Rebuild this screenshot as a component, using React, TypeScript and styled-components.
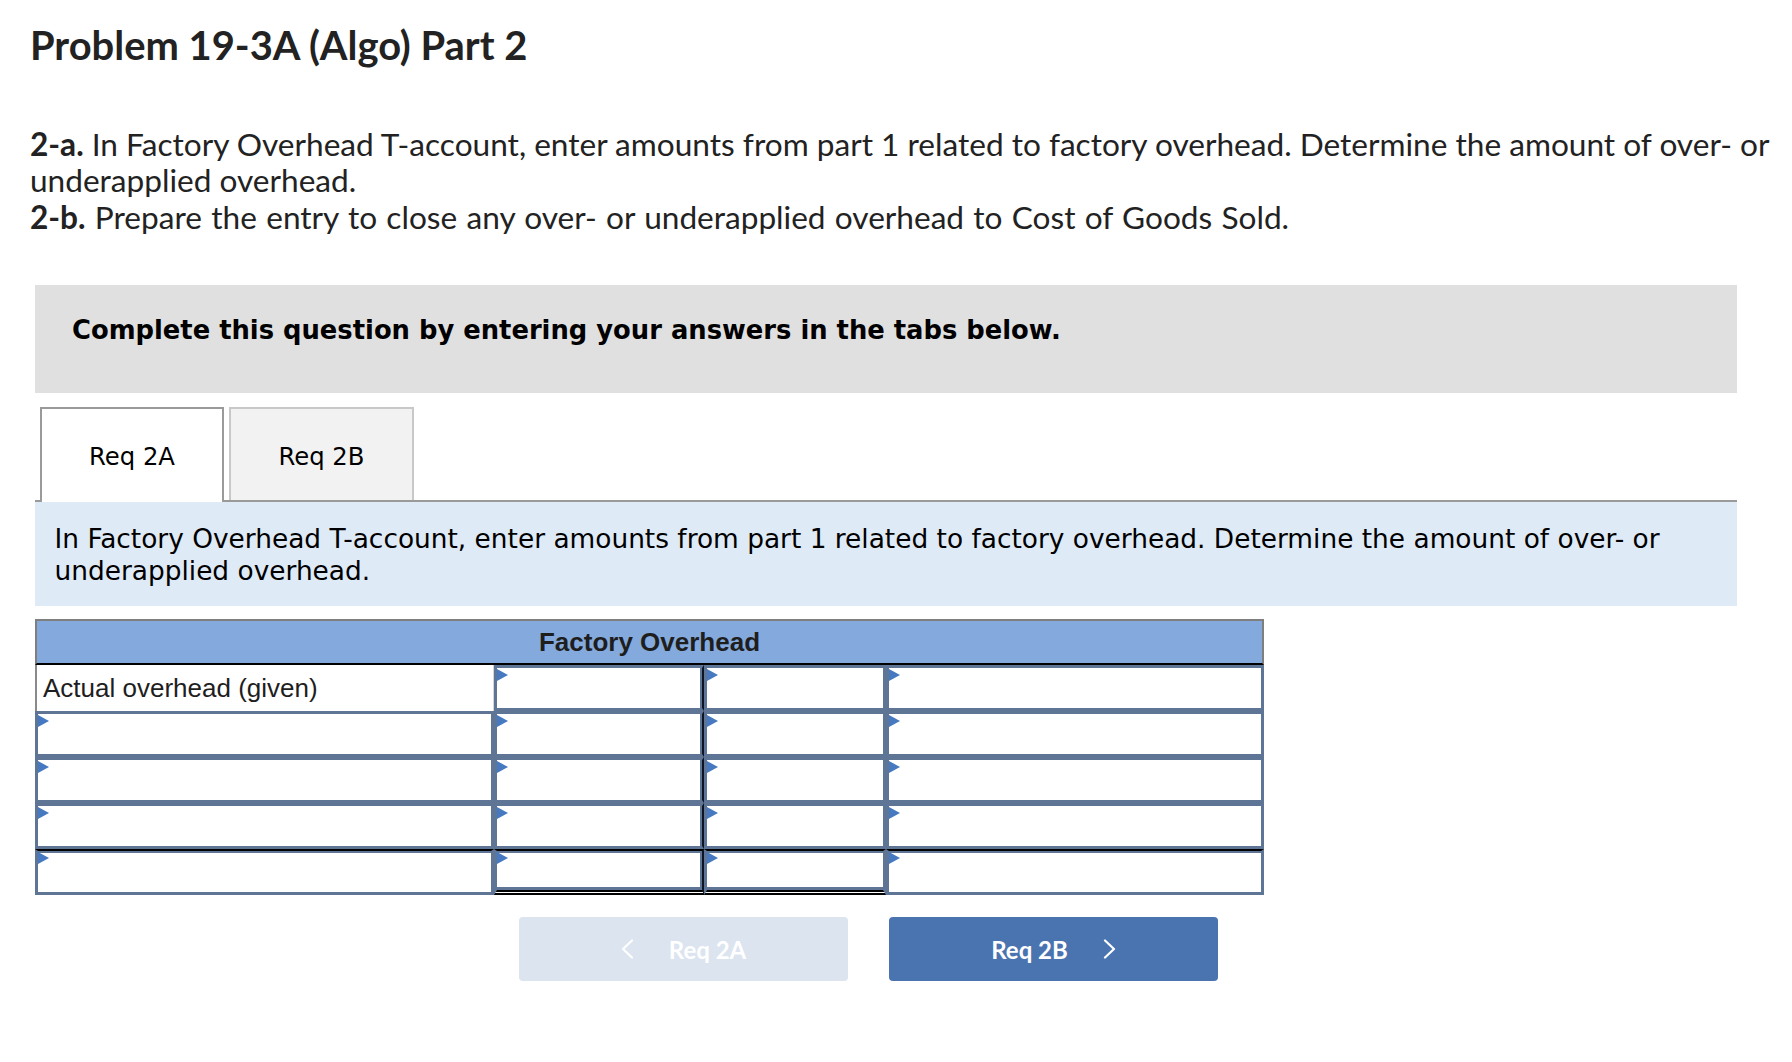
import React from "react";
import styled, { createGlobalStyle, css } from "styled-components";

const GlobalStyle = createGlobalStyle`
  html, body { margin: 0; padding: 0; background: #ffffff; }
  body { font-family: "Lato", "Liberation Sans", sans-serif; color: #222222; }
  * { box-sizing: border-box; }
`;

const SLATE = "#5f7596";

const Page = styled.div`
  padding-top: 21px;
  width: 1792px;
`;

const Title = styled.h1`
  margin: 0 0 0 30px;
  font-family: "Lato", sans-serif;
  font-weight: 700;
  font-size: 39.9px;
  line-height: 48px;
  color: #222222;
`;

const Prompt = styled.div`
  margin: 56.5px 0 0 30px;
  font-family: "Lato", sans-serif;
  font-size: 31.6px;
  line-height: 36.7px;
  color: #222222;
  white-space: nowrap;
`;

const Lead = styled.b`
  font-weight: 700;
`;

const Line = styled.span<{ $loose?: boolean }>`
  word-spacing: ${(p) => (p.$loose ? "1.2px" : "0")};
`;

const Content = styled.div`
  margin-left: 35px;
  width: 1702px;
`;

const InfoBar = styled.div`
  margin-top: 49.4px;
  background: #e0e0e0;
  padding: 30px 37px 48px;
  font-family: "DejaVu Sans", Verdana, sans-serif;
  font-weight: 700;
  font-size: 25.8px;
  line-height: 30px;
  color: #000000;
`;

const TabList = styled.div`
  margin-top: 14px;
  display: flex;
  align-items: flex-start;
  gap: 5px;
  padding-left: 5px;
  border-bottom: 2px solid #9a9a9a;
  height: 95px;
`;

const Tab = styled.div<{ $active?: boolean }>`
  width: ${(p) => (p.$active ? 184 : 185)}px;
  height: ${(p) => (p.$active ? 95 : 93)}px;
  display: flex;
  align-items: center;
  justify-content: center;
  padding-top: 4px;
  padding-bottom: ${(p) => (p.$active ? 2 : 0)}px;
  font-family: "DejaVu Sans", Verdana, sans-serif;
  font-size: 24.3px;
  line-height: 28px;
  color: #000000;
  border: 2px solid ${(p) => (p.$active ? "#9a9a9a" : "#c8c8c8")};
  border-bottom: 0;
  background: ${(p) => (p.$active ? "#ffffff" : "#f2f2f2")};
`;

const Instruction = styled.div`
  background: #dfeaf7;
  padding: 21px 16px 19px 19.5px;
  font-family: "DejaVu Sans", Verdana, sans-serif;
  font-size: 26.4px;
  line-height: 32px;
  color: #000000;
`;

const TAccount = styled.div`
  margin-top: 13px;
  width: 1229px;
`;

const Header = styled.div`
  height: 46px;
  display: flex;
  align-items: center;
  justify-content: center;
  background: #84aadd;
  border: 2px solid #7f7f7f;
  border-bottom: 2px solid #000000;
  font-family: "Liberation Sans", Arial, sans-serif;
  font-weight: 700;
  font-size: 26px;
  color: #1e1e1e;
`;

const Grid = styled.div`
  display: grid;
  grid-template-columns: 459px 210px 182px 378px;
  grid-auto-rows: 46px;
`;

const LabelCell = styled.div`
  display: flex;
  align-items: center;
  padding-left: 6px;
  border-left: 2px solid #8a8a8a;
  border-right: 1px solid #d6d6d6;
  font-family: "Liberation Sans", Arial, sans-serif;
  font-size: 26px;
  color: #1e1e1e;
  background: #ffffff;
`;

const InputCell = styled.div<{ $tLine?: boolean; $total?: boolean; $double?: boolean }>`
  position: relative;
  background: #ffffff;
  border: 3px solid ${SLATE};
  ${(p) =>
    p.$tLine &&
    css`
      border-right: 2px solid #0d1524;
    `}
  ${(p) =>
    p.$total &&
    css`
      border-top: 2px solid #000000;
    `}
  ${(p) =>
    p.$double &&
    css`
      border-bottom: 5px double #000000;
    `}
  box-shadow: ${(p) => {
    const s: string[] = [];
    if (p.$tLine) s.push(`inset -2px 0 0 ${SLATE}`);
    if (p.$total) s.push(`inset 0 2px 0 ${SLATE}`);
    if (p.$double) s.push(`inset 0 -3px 0 ${SLATE}`);
    return s.length ? s.join(", ") : "none";
  }};

  &::before {
    content: "";
    position: absolute;
    left: 0;
    top: 1px;
    width: 0;
    height: 0;
    border-left: 11px solid #4679c0;
    border-top: 6.5px solid transparent;
    border-bottom: 6.5px solid transparent;
  }
`;

const NavRow = styled.div`
  margin-top: 22px;
  padding-left: 484px;
  display: flex;
  gap: 41px;
`;

const NavButton = styled.button<{ $disabled?: boolean }>`
  width: 329px;
  height: 64px;
  border: 0;
  border-radius: 4px;
  display: flex;
  align-items: center;
  justify-content: center;
  gap: 35px;
  font-family: "Lato", sans-serif;
  font-weight: 700;
  font-size: 24px;
  color: #ffffff;
  background: ${(p) => (p.$disabled ? "#dbe4ef" : "#4a74b0")};
  cursor: ${(p) => (p.$disabled ? "default" : "pointer")};
  padding: 0;
`;

const Chevron = ({ dir }: { dir: "left" | "right" }) => (
  <svg width="13" height="20" viewBox="0 0 13 20" aria-hidden="true">
    <polyline
      points={dir === "left" ? "11,1.5 2,10 11,18.5" : "2,1.5 11,10 2,18.5"}
      fill="none"
      stroke="#ffffff"
      strokeWidth="2.2"
      strokeLinecap="round"
      strokeLinejoin="round"
    />
  </svg>
);

const rows = [0, 1, 2, 3, 4];

export default function App() {
  return (
    <>
      <GlobalStyle />
      <Page>
        <Title>Problem 19-3A (Algo) Part 2</Title>
        <Prompt>
          <Lead>2-a.</Lead>
          <Line>
            {" "}
            In Factory Overhead T-account, enter amounts from part 1 related to factory overhead. Determine the
            amount of over- or
          </Line>
          <br />
          <Line>underapplied overhead.</Line>
          <br />
          <Lead>2-b.</Lead>
          <Line $loose> Prepare the entry to close any over- or underapplied overhead to Cost of Goods Sold.</Line>
        </Prompt>
        <Content>
          <InfoBar>Complete this question by entering your answers in the tabs below.</InfoBar>
          <TabList>
            <Tab $active>Req 2A</Tab>
            <Tab>Req 2B</Tab>
          </TabList>
          <Instruction>
            In Factory Overhead T-account, enter amounts from part 1 related to factory overhead. Determine the
            amount of over- or underapplied overhead.
          </Instruction>
          <TAccount>
            <Header>Factory Overhead</Header>
            <Grid>
              {rows.map((r) => (
                <React.Fragment key={r}>
                  {r === 0 ? (
                    <LabelCell>Actual overhead (given)</LabelCell>
                  ) : (
                    <InputCell $total={r === 4} />
                  )}
                  <InputCell $tLine $total={r === 4} $double={r === 4} />
                  <InputCell $total={r === 4} $double={r === 4} />
                  <InputCell $total={r === 4} />
                </React.Fragment>
              ))}
            </Grid>
          </TAccount>
          <NavRow>
            <NavButton $disabled>
              <Chevron dir="left" />
              Req 2A
            </NavButton>
            <NavButton>
              Req 2B
              <Chevron dir="right" />
            </NavButton>
          </NavRow>
        </Content>
      </Page>
    </>
  );
}
